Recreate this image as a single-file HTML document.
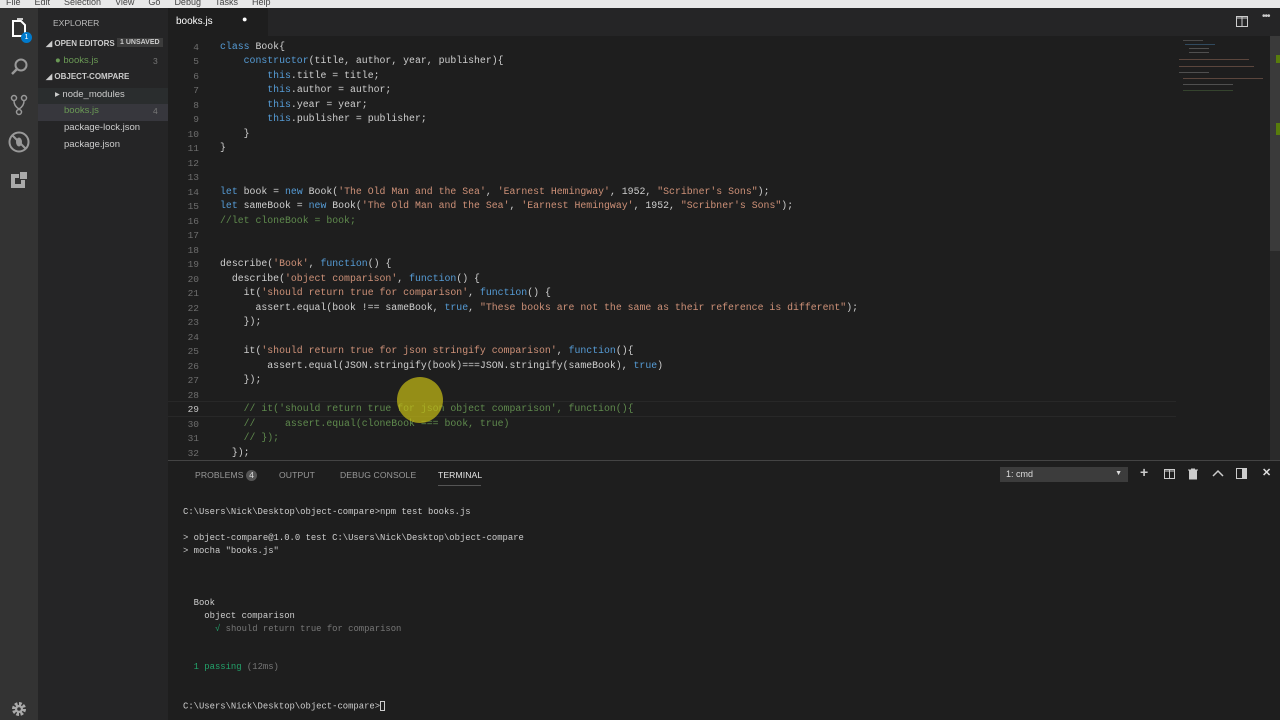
<!DOCTYPE html>
<html><head><meta charset="utf-8"><style>
*{margin:0;padding:0;box-sizing:border-box}
html,body{width:1280px;height:720px;overflow:hidden}
body{background:#1e1e1e;font-family:"Liberation Sans",sans-serif;position:relative}
.abs{position:absolute}
#menu{left:0;top:0;width:1280px;height:8px;background:#e8e8e8;font-size:9px;color:#444;line-height:4px;overflow:hidden;white-space:nowrap}
#menu span{margin-left:6px;margin-right:8px}
#act{left:0;top:8px;width:38px;height:712px;background:#333333}
#side{left:38px;top:8px;width:130px;height:712px;background:#252526;font-size:9.5px;color:#ccc}
#tabs{left:168px;top:8px;width:1112px;height:28px;background:#252526}
.tab{left:0;top:0;width:100px;height:28px;background:#1e1e1e;color:#fff;font-size:10px;padding:8px 0 0 8px}
.code{font-family:"Liberation Mono",monospace;font-size:9.85px;white-space:pre;color:#cfcfcf}
.ln{position:absolute;left:168px;width:31px;text-align:right;color:#6e6e6e;font-family:"Liberation Mono",monospace;font-size:9.5px}
.cl{position:absolute;left:220px}
.k{color:#569cd6}.s{color:#ce9178}.c{color:#5f8a4d}.f{color:#dcdcaa}
#panel{left:168px;top:460px;width:1112px;height:260px;background:#1e1e1e;border-top:1px solid #444}
.pt{position:absolute;top:9px;font-size:8.6px;color:#999;letter-spacing:.1px}
.term{font-family:"Liberation Mono",monospace;font-size:8.9px;white-space:pre;color:#ccc;position:absolute;left:183px}
</style></head><body>
<div id="menu" class="abs"><span>File</span><span>Edit</span><span>Selection</span><span>View</span><span>Go</span><span>Debug</span><span>Tasks</span><span>Help</span></div>
<div id="act" class="abs">
<svg class="abs" style="left:9px;top:10px" width="22" height="22" viewBox="0 0 22 22"><path d="M4 3h8l4 4v11H4z" fill="none" stroke="#fff" stroke-width="2"/><path d="M8 1h6" stroke="#fff" stroke-width="1.5"/></svg>
<div class="abs" style="left:21px;top:24px;width:11px;height:11px;border-radius:50%;background:#007acc;color:#fff;font-size:7px;text-align:center;line-height:11px">1</div>
<svg class="abs" style="left:9px;top:49px" width="20" height="20"><circle cx="12" cy="8" r="5.5" fill="none" stroke="#999" stroke-width="2"/><path d="M8 12L3 17" stroke="#999" stroke-width="2.5"/></svg>
<svg class="abs" style="left:9px;top:86px" width="20" height="22"><circle cx="5" cy="4" r="2.5" fill="none" stroke="#999" stroke-width="1.5"/><circle cx="15" cy="4" r="2.5" fill="none" stroke="#999" stroke-width="1.5"/><circle cx="10" cy="18" r="2.5" fill="none" stroke="#999" stroke-width="1.5"/><path d="M5 7q0 5 5 8M15 7q0 5-5 8" fill="none" stroke="#999" stroke-width="1.5"/></svg>
<svg class="abs" style="left:8px;top:123px" width="22" height="22"><circle cx="11" cy="11" r="9.5" fill="none" stroke="#999" stroke-width="2"/><path d="M4 4l14 14" stroke="#999" stroke-width="2"/><ellipse cx="11" cy="11" rx="3" ry="4.5" fill="#999"/></svg>
<svg class="abs" style="left:10px;top:163px" width="18" height="18"><path d="M1 3h8v4H5v6h6V9h4v8H1z" fill="#aaa"/><path d="M10 1h7v7h-7z" fill="#aaa"/></svg>
<svg class="abs" style="left:10px;top:692px" width="18" height="18" viewBox="0 0 18 18"><circle cx="9" cy="9" r="5" fill="none" stroke="#aaa" stroke-width="4" stroke-dasharray="2.5 1.4"/><circle cx="9" cy="9" r="4" fill="#aaa"/><circle cx="9" cy="9" r="1.8" fill="#333"/></svg>
</div>
<div id="side" class="abs">
<div class="abs" style="left:15px;top:10px;font-size:8.5px;color:#bbb">EXPLORER</div>
<div class="abs" style="left:8px;top:31px;font-size:8px;font-weight:bold;color:#ccc">◢ OPEN EDITORS</div>
<div class="abs" style="left:79px;top:30px;background:#3c3c3c;font-size:7px;font-weight:bold;color:#ccc;padding:1px 3px">1 UNSAVED</div>
<div class="abs" style="left:17px;top:47px;color:#6a9955">● books.js</div>
<div class="abs" style="left:115px;top:48px;color:#777;font-size:8.5px">3</div>
<div class="abs" style="left:8px;top:64px;font-size:8px;font-weight:bold;color:#ccc">◢ OBJECT-COMPARE</div>
<div class="abs" style="left:0;top:80px;width:130px;height:17px;background:#2a2d2e"></div>
<div class="abs" style="left:17px;top:81px;color:#ccc">▸ node_modules</div>
<div class="abs" style="left:0;top:96px;width:130px;height:17px;background:#37373d"></div>
<div class="abs" style="left:26px;top:97px;color:#6a9955">books.js</div>
<div class="abs" style="left:115px;top:98px;color:#777;font-size:8.5px">4</div>
<div class="abs" style="left:26px;top:114px">package-lock.json</div>
<div class="abs" style="left:26px;top:131px">package.json</div>
</div>
<div id="tabs" class="abs"><div class="tab abs">books.js<span style="position:absolute;left:74px;top:6px;font-size:9px">●</span></div>
<svg class="abs" style="left:1068px;top:8px" width="12" height="11"><rect x=".5" y=".5" width="11" height="10" fill="none" stroke="#ccc"/><path d="M6 0v11M0 2h12" stroke="#ccc"/></svg>
<div class="abs" style="left:1094px;top:3px;color:#ccc;font-size:10px;letter-spacing:-1px">•••</div></div>
<div class="abs" style="left:1175px;top:37px;width:95px;height:60px;opacity:.35">
<div style="margin:3px 8px;height:1px;width:20px;background:#999"></div><div style="margin:3px 10px;height:1px;width:30px;background:#569cd6"></div><div style="margin:3px 14px;height:1px;width:20px;background:#aaa"></div><div style="margin:3px 14px;height:1px;width:20px;background:#aaa"></div><div style="margin:6px 4px;height:1px;width:70px;background:#ce9178"></div><div style="margin:3px 4px;height:1px;width:75px;background:#ce9178"></div><div style="margin:5px 4px;height:1px;width:30px;background:#aaa"></div><div style="margin:3px 8px;height:1px;width:80px;background:#ce9178"></div><div style="margin:5px 8px;height:1px;width:50px;background:#aaa"></div><div style="margin:4px 8px;height:1px;width:50px;background:#608b4e"></div>
</div>
<div class="abs" style="left:1270px;top:36px;width:10px;height:424px;background:#2a2a2a"></div>
<div class="abs" style="left:1270px;top:36px;width:10px;height:215px;background:#3a3a3a"></div>
<div class="abs" style="left:1276px;top:55px;width:4px;height:8px;background:#587c0c"></div>
<div class="abs" style="left:1276px;top:123px;width:4px;height:12px;background:#587c0c"></div>
<div class="abs" style="left:168px;top:401px;width:1008px;height:16px;border-top:1px solid #282828;border-bottom:1px solid #282828"></div>
<div class="code">
<div class="ln" style="top:42px">4</div><div class="cl" style="top:41px"><span class="k">class</span> Book{</div>
<div class="ln" style="top:56px">5</div><div class="cl" style="top:55px">    <span class="k">constructor</span>(title, author, year, publisher){</div>
<div class="ln" style="top:71px">6</div><div class="cl" style="top:70px">        <span class="k">this</span>.title = title;</div>
<div class="ln" style="top:85px">7</div><div class="cl" style="top:84px">        <span class="k">this</span>.author = author;</div>
<div class="ln" style="top:100px">8</div><div class="cl" style="top:99px">        <span class="k">this</span>.year = year;</div>
<div class="ln" style="top:114px">9</div><div class="cl" style="top:113px">        <span class="k">this</span>.publisher = publisher;</div>
<div class="ln" style="top:129px">10</div><div class="cl" style="top:128px">    }</div>
<div class="ln" style="top:143px">11</div><div class="cl" style="top:142px">}</div>
<div class="ln" style="top:158px">12</div>
<div class="ln" style="top:172px">13</div>
<div class="ln" style="top:187px">14</div><div class="cl" style="top:186px"><span class="k">let</span> book = <span class="k">new</span> Book(<span class="s">'The Old Man and the Sea'</span>, <span class="s">'Earnest Hemingway'</span>, 1952, <span class="s">"Scribner's Sons"</span>);</div>
<div class="ln" style="top:201px">15</div><div class="cl" style="top:200px"><span class="k">let</span> sameBook = <span class="k">new</span> Book(<span class="s">'The Old Man and the Sea'</span>, <span class="s">'Earnest Hemingway'</span>, 1952, <span class="s">"Scribner's Sons"</span>);</div>
<div class="ln" style="top:216px">16</div><div class="cl c" style="top:215px">//let cloneBook = book;</div>
<div class="ln" style="top:230px">17</div>
<div class="ln" style="top:245px">18</div>
<div class="ln" style="top:259px">19</div><div class="cl" style="top:258px">describe(<span class="s">'Book'</span>, <span class="k">function</span>() {</div>
<div class="ln" style="top:274px">20</div><div class="cl" style="top:273px">  describe(<span class="s">'object comparison'</span>, <span class="k">function</span>() {</div>
<div class="ln" style="top:288px">21</div><div class="cl" style="top:287px">    it(<span class="s">'should return true for comparison'</span>, <span class="k">function</span>() {</div>
<div class="ln" style="top:303px">22</div><div class="cl" style="top:302px">      assert.equal(book !== sameBook, <span class="k">true</span>, <span class="s">"These books are not the same as their reference is different"</span>);</div>
<div class="ln" style="top:317px">23</div><div class="cl" style="top:316px">    });</div>
<div class="ln" style="top:332px">24</div>
<div class="ln" style="top:346px">25</div><div class="cl" style="top:345px">    it(<span class="s">'should return true for json stringify comparison'</span>, <span class="k">function</span>(){</div>
<div class="ln" style="top:361px">26</div><div class="cl" style="top:360px">        assert.equal(JSON.stringify(book)===JSON.stringify(sameBook), <span class="k">true</span>)</div>
<div class="ln" style="top:375px">27</div><div class="cl" style="top:374px">    });</div>
<div class="ln" style="top:390px">28</div>
<div class="ln" style="top:404px;color:#c6c6c6">29</div><div class="cl c" style="top:403px">    // it('should return true for json object comparison', function(){</div>
<div class="ln" style="top:419px">30</div><div class="cl c" style="top:418px">    //     assert.equal(cloneBook === book, true)</div>
<div class="ln" style="top:433px">31</div><div class="cl c" style="top:432px">    // });</div>
<div class="ln" style="top:448px">32</div><div class="cl" style="top:447px">  });</div>
</div>
<div class="abs" style="left:397px;top:377px;width:46px;height:46px;border-radius:50%;background:rgba(200,190,20,.7)"></div>
<div id="panel" class="abs">
<div class="pt" style="left:27px">PROBLEMS <span style="display:inline-block;background:#555;color:#ddd;border-radius:50%;width:11px;height:11px;text-align:center;line-height:11px">4</span></div>
<div class="pt" style="left:111px">OUTPUT</div>
<div class="pt" style="left:172px">DEBUG CONSOLE</div>
<div class="pt" style="left:270px;color:#e7e7e7">TERMINAL</div>
<div class="abs" style="left:270px;top:24px;width:43px;height:1px;background:#555"></div>
<div class="abs" style="left:832px;top:6px;width:128px;height:15px;background:#3c3c3c;color:#ddd;font-size:9px;padding:2px 6px">1: cmd<span style="position:absolute;right:6px;font-size:7px;top:3px">▼</span></div>
<div class="abs" style="left:972px;top:3px;color:#ccc;font-size:14px;font-weight:bold">+</div>
<svg class="abs" style="left:996px;top:8px" width="11" height="10"><rect x=".5" y=".5" width="10" height="9" fill="none" stroke="#ccc"/><path d="M5.5 0v10M0 2h11" stroke="#ccc"/></svg>
<svg class="abs" style="left:1020px;top:7px" width="10" height="12"><path d="M0 2h10M3 1h4M1.5 3h7v8h-7z" fill="#ccc" stroke="#ccc"/></svg>
<svg class="abs" style="left:1044px;top:8px" width="12" height="8"><path d="M1 7l5-5 5 5" fill="none" stroke="#ccc" stroke-width="1.5"/></svg>
<svg class="abs" style="left:1068px;top:7px" width="11" height="11"><rect x=".5" y=".5" width="10" height="10" fill="none" stroke="#ccc"/><rect x="6" y="0" width="5" height="11" fill="#ccc"/></svg>
<div class="abs" style="left:1094px;top:5px;color:#ddd;font-size:11px;font-weight:bold">✕</div>
</div>
<div class="term" style="top:507px">C:\Users\Nick\Desktop\object-compare>npm test books.js</div>
<div class="term" style="top:533px">> object-compare@1.0.0 test C:\Users\Nick\Desktop\object-compare</div>
<div class="term" style="top:546px">> mocha "books.js"</div>
<div class="term" style="top:598px">  Book</div>
<div class="term" style="top:611px">    object comparison</div>
<div class="term" style="top:624px;color:#777">      <span style="color:#23a36b">√</span> should return true for comparison</div>
<div class="term" style="top:662px;color:#777">  <span style="color:#23a36b">1 passing</span> (12ms)</div>
<div class="term" style="top:701px">C:\Users\Nick\Desktop\object-compare><span style="display:inline-block;width:5px;height:10px;border:1px solid #ccc;vertical-align:middle"></span></div>
</body></html>
